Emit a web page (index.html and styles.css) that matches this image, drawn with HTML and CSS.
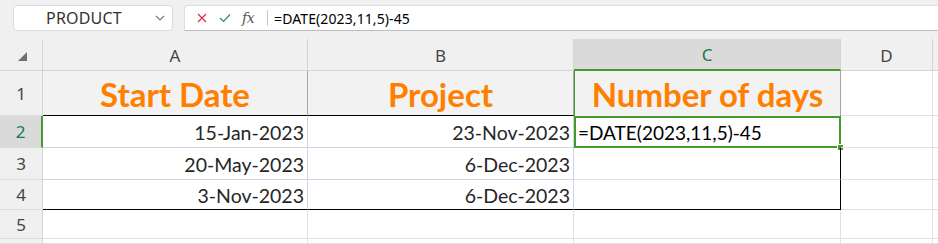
FILE: index.html
```html
<!DOCTYPE html>
<html>
<head>
<meta charset="utf-8">
<link rel="stylesheet" href="styles.css">
</head>
<body>
<div class="app">
  <div class="topbar">
    <div class="namebox">
      <span class="name">PRODUCT</span>
      <svg class="chev" width="10" height="6" viewBox="0 0 10 6"><path d="M1 1 L5 5 L9 1" fill="none" stroke="#777" stroke-width="1.1"/></svg>
    </div>
    <div class="fbar">
      <svg class="ico" width="10" height="10" viewBox="0 0 10 10"><path d="M1 1 L9 9 M9 1 L1 9" stroke="#d0334a" stroke-width="1.2"/></svg>
      <svg class="ico ok" width="12" height="10" viewBox="0 0 12 10"><path d="M1 5 L4.5 8.5 L11 1.5" fill="none" stroke="#2f8f5a" stroke-width="1.2"/></svg>
      <span class="fx">fx</span>
      <span class="sep"></span>
      <span class="ftext">=DATE(2023,11,5)-45</span>
    </div>
  </div>
  <div class="sheet">
    <div class="corner"><svg width="10" height="10" viewBox="0 0 10 10"><path d="M9 0 L9 9 L0 9 Z" fill="#707070"/></svg></div>
    <div class="ch">A</div>
    <div class="ch">B</div>
    <div class="ch sel">C</div>
    <div class="ch">D</div>
    <div class="ch last"></div>

    <div class="rh">1</div>
    <div class="c hd b-a1">Start Date</div>
    <div class="c hd b-b1">Project</div>
    <div class="c hd c1">Number of days</div>
    <div class="c"></div>
    <div class="c last"></div>

    <div class="rh sel">2</div>
    <div class="c num t-a">15-Jan-2023</div>
    <div class="c num t-a">23-Nov-2023</div>
    <div class="c edit">=DATE(2023,11,5)-45<span class="handle"></span></div>
    <div class="c"></div>
    <div class="c last"></div>

    <div class="rh">3</div>
    <div class="c num t-a">20-May-2023</div>
    <div class="c num t-a">6-Dec-2023</div>
    <div class="c t-c"></div>
    <div class="c"></div>
    <div class="c last"></div>

    <div class="rh">4</div>
    <div class="c num t-a4">3-Nov-2023</div>
    <div class="c num t-a4">6-Dec-2023</div>
    <div class="c t-c4"></div>
    <div class="c"></div>
    <div class="c last"></div>

    <div class="rh">5</div>
    <div class="c"></div>
    <div class="c"></div>
    <div class="c"></div>
    <div class="c"></div>
    <div class="c last"></div>

    <div class="rh"></div>
    <div class="c"></div>
    <div class="c"></div>
    <div class="c"></div>
    <div class="c"></div>
    <div class="c last"></div>
  </div>
</div>
</body>
</html>
```

FILE: styles.css
```css
* { box-sizing: border-box; }
html, body { margin: 0; padding: 0; }
body { width: 938px; height: 244px; overflow: hidden; background: #fff; }
.app { width: 938px; height: 244px; display: flex; flex-direction: column; }

.topbar {
  height: 39px;
  background: #f0f0f0;
  display: flex;
  align-items: flex-start;
  padding: 5px 0 0 13px;
  gap: 11px;
  flex: none;
}
.namebox {
  width: 160px; height: 26px;
  background: #fff;
  border: 1px solid #dadada;
  border-radius: 4px;
  display: flex; align-items: center;
  padding-left: 32px;
}
.name { font-family: "Noto Sans", sans-serif; font-size: 16px; color: #333; letter-spacing: 0.2px; }
.chev { margin-left: auto; margin-right: 7px; }
.fbar {
  flex: 1; height: 26px;
  background: #fff;
  border-top: 1px solid #dedede;
  border-left: 1px solid #dedede;
  border-bottom: 1px solid #bcbcbc;
  border-radius: 4px 0 0 0;
  display: flex; align-items: center;
  padding-left: 12px;
}
.ico { flex: none; }
.ok { margin-left: 12px; }
.fx { font-family: "DejaVu Serif", serif; font-style: italic; font-size: 14px; color: #555; margin-left: 11px; letter-spacing: -0.5px; }
.sep { width: 1px; height: 16px; background: #c8c8c8; margin-left: 13px; }
.ftext { font-family: "Noto Sans", sans-serif; font-size: 14px; color: #000; margin-left: 6px; letter-spacing: 0.1px; }

.sheet {
  flex: 1;
  display: grid;
  grid-template-columns: 43px 265px 266px 267px 92px 1fr;
  grid-template-rows: 32px 45px 32px 32px 30px 29px 1fr;
  font-family: "Lato", sans-serif;
}
.corner { background: #f0f0f0; border-right: 1px solid #d4d4d4; border-bottom: 1px solid #d4d4d4; position: relative; }
.corner svg { position: absolute; left: 18px; top: 13px; }
.ch {
  background: #f0f0f0;
  border-right: 1px solid #d4d4d4;
  border-bottom: 1px solid #d4d4d4;
  display: flex; align-items: center; justify-content: center;
  font-family: "Noto Sans", sans-serif; font-size: 17px; color: #444;
  padding-top: 1px;
}
.ch.sel { background: #dadada; border-bottom: 2px solid #459a2e; color: #137a52; }
.ch.last { border-right: none; }
.rh {
  background: #f0f0f0;
  border-right: 1px solid #d4d4d4;
  border-bottom: 1px solid #dcdcdc;
  display: flex; align-items: center; justify-content: center;
  font-family: "Noto Sans", sans-serif; font-size: 17px; color: #444;
}
.rh.sel { background: #dadada; border-right: 2px solid #459a2e; color: #137a52; }
.c {
  border-right: 1px solid #e1e1e1;
  border-bottom: 1px solid #e1e1e1;
  display: flex; align-items: center;
  position: relative;
}
.c.last { border-right: none; }
.hd {
  background: #f2f2f2;
  justify-content: center;
  color: #ff7f00;
  font-weight: bold;
  font-size: 33px;
  padding-top: 1px;
  border-bottom: 1px solid #000;
}
.b-a1, .b-b1 { border-right: 1px solid #a6a6a6; }
.c1 { border-left: 1px solid #459a2e; border-right: 1px solid #a6a6a6; border-bottom: none; }
.num {
  justify-content: flex-end;
  padding-right: 3px;
  font-size: 19.5px;
  color: #262626;
  padding-top: 1px;
}
.t-a { border-right: 1px solid #d2d2e2; border-bottom: 1px solid #d2d2e2; }
.t-a4 { border-right: 1px solid #d2d2e2; border-bottom: 1px solid #000; }
.edit {
  border: 2px solid #459a2e;
  font-size: 19px;
  color: #000;
  padding-left: 2px;
  overflow: visible;
}
.handle {
  position: absolute; right: -5px; bottom: -5px;
  width: 7px; height: 7px;
  background: #459a2e;
  border: 1px solid #fff;
}
.t-c { border-right: 1px solid #000; }
.t-c4 { border-right: 1px solid #000; border-bottom: 1px solid #000; }
```
